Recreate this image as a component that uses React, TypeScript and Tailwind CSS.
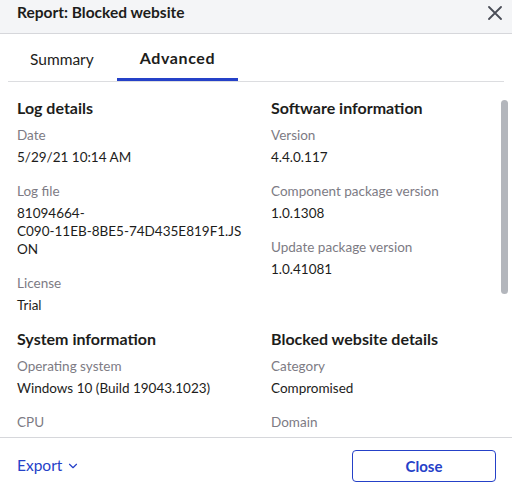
import { ChevronDown } from "lucide-react"

interface FieldProps {
    label: string;
    value: string;
}

const logDetails: FieldProps[] = [
    { label: "Date", value: "5/29/21 10:14 AM" },
    { label: "Log file", value: "81094664-\nC090-11EB-8BE5-74D435E819F1.JS\nON" },
    { label: "License", value: "Trial" },
]

const softwareInfo: FieldProps[] = [
    { label: "Version", value: "4.4.0.117" },
    { label: "Component package version", value: "1.0.1308" },
    { label: "Update package version", value: "1.0.41081" },
]

const systemInfo: FieldProps[] = [
    { label: "Operating system", value: "Windows 10 (Build 19043.1023)" },
    { label: "CPU", value: "x64" },
]

const blockedInfo: FieldProps[] = [
    { label: "Category", value: "Compromised" },
    { label: "Domain", value: "www.example.com" },
]

function Section({ title, fields }: { title: string; fields: FieldProps[] }) {
    return (
        <div className="flex flex-col">
            <h3 className="text-[16px] leading-[20px] font-bold text-[#1d1d1b] mb-[7px]">
                {title}
            </h3>
            {fields.map((f) => (
                <div key={f.label} className="flex flex-col mb-[15px]">
                    <p className="text-[13.5px] leading-[20px] text-[#7d7b84] whitespace-nowrap">{f.label}</p>
                    <p className="text-[13.5px] leading-[18px] mt-[3px] text-[#1d1d1b] whitespace-pre-line">{f.value}</p>
                </div>
            ))}
        </div>
    )
}

export default function App() {
    return (
        <div className="w-[512px] h-[490px] bg-white flex flex-col overflow-hidden" style={{ fontFamily: "Lato, 'Open Sans', sans-serif" }}>
            {/* header */}
            <div className="h-[34px] shrink-0 bg-[#f4f5f7] border-b border-[#d6d7db] flex items-center justify-between pl-[17px] pr-[10px] pb-[8px]">
                <h2 className="text-[15.5px] font-bold text-[#1d1d1b]">Report: Blocked website</h2>
                <svg width="14" height="14" viewBox="0 0 14 14" className="text-[#4a4d57]">
                    <path d="M1 1 L13 13 M13 1 L1 13" stroke="currentColor" strokeWidth="1.8" strokeLinecap="round" />
                </svg>
            </div>

            {/* tabs */}
            <div className="mx-2 h-[48px] shrink-0 flex items-end border-b border-[#dcdde0]">
                <div className="pl-[22px] pr-[23px] h-full flex items-center pt-[4px] text-[15.5px] text-[#1d1d1b]">
                    Summary
                </div>
                <div className="px-[23px] h-full flex items-center pt-[4px] text-[16px] tracking-[0.6px] font-bold text-[#1d1d1b] border-b-[3px] border-[#2541c8]">
                    Advanced
                </div>
            </div>

            {/* content */}
            <div className="relative flex-1 overflow-hidden">
                <div className="grid grid-cols-[234px_1fr] gap-x-[20px] pl-[17px] pr-[26px] pt-[16px]">
                    <Section title="Log details" fields={logDetails} />
                    <Section title="Software information" fields={softwareInfo} />
                    <Section title="System information" fields={systemInfo} />
                    <Section title="Blocked website details" fields={blockedInfo} />
                </div>
                <div className="absolute right-[4px] top-[18px] w-[7px] h-[194px] rounded-full bg-[#b3b6bc]" />
            </div>

            {/* footer */}
            <div className="h-[53px] shrink-0 border-t border-[#d6d7db] flex items-center justify-between pl-[17px] pr-[16px] pt-[4px]">
                <button className="flex items-center gap-[4px] text-[15.5px] text-[#2541c8]">
                    Export
                    <ChevronDown size={14} strokeWidth={2} />
                </button>
                <button className="w-[144px] h-[32px] rounded-[4px] border border-[#2541c8] text-[15px] font-bold text-[#2541c8]">
                    Close
                </button>
            </div>
        </div>
    )
}
